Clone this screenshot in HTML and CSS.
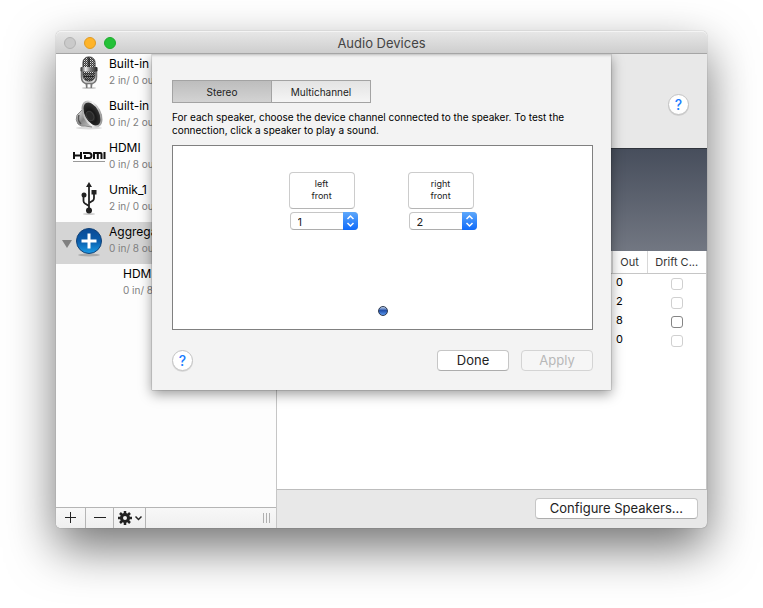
FILE: index.html
```html
<!DOCTYPE html>
<html lang="en">
<head>
    <meta charset="UTF-8">
    <meta name="viewport" content="width=device-width, initial-scale=1.0">
    <title>Audio Devices</title>
    <link rel="stylesheet" href="styles.css">
</head>
<body>
    <div class="window">
        <header class="titlebar">
            <button class="light close" aria-label="Close"></button>
            <button class="light minimize" aria-label="Minimize"></button>
            <button class="light zoom" aria-label="Zoom"></button>
            <h1>Audio Devices</h1>
        </header>
        <div class="content">
            <aside class="sidebar">
                <ul class="devices">
                    <li class="device">
                        <svg class="device-icon" viewBox="0 0 34 34">
                            <defs>
                                <linearGradient id="chrome">
                                    <stop offset="0" stop-color="#222"/>
                                    <stop offset=".3" stop-color="#eee"/>
                                    <stop offset=".6" stop-color="#777"/>
                                    <stop offset="1" stop-color="#222"/>
                                </linearGradient>
                                <pattern id="mesh" width="2" height="2" patternUnits="userSpaceOnUse">
                                    <rect width="2" height="2" fill="#3a3a3a"/>
                                    <rect width="1" height="1" fill="#ddd"/>
                                    <rect x="1" y="1" width="1" height="1" fill="#888"/>
                                </pattern>
                            </defs>
                            <ellipse cx="17" cy="32" rx="7" ry="1" fill="#c8c8c8"/>
                            <path d="M9.500 14v7q0 5 4 6.500h7q4-1.500 4-6.500v-7" fill="#d8d8d8" stroke="#777" stroke-width="1.500"/>
                            <rect x="11" y="1" width="12" height="24" rx="5.500" fill="url(#mesh)" stroke="#333"/>
                            <rect x="8.500" y="11" width="17" height="4.500" rx="1" fill="url(#chrome)"/>
                            <path d="M17 2v9" stroke="#222" stroke-width="1.500"/>
                            <path d="M12 18h10M12 20.500h10M13 23h8" stroke="#222"/>
                            <path d="M13.500 27h7l-.5 5h-1.500v-4h-3v4H14z" fill="#777"/>
                        </svg>
                        <div><p class="name">Built-in Microphone</p><p class="ports">2 in/ 0 outs</p></div>
                    </li>
                    <li class="device">
                        <svg class="device-icon" viewBox="0 0 34 34">
                            <defs>
                                <linearGradient id="rim" x2="1" y2="1">
                                    <stop offset="0" stop-color="#888"/>
                                    <stop offset=".5" stop-color="#f4f4f4"/>
                                    <stop offset="1" stop-color="#777"/>
                                </linearGradient>
                                <linearGradient id="body" x2="1" y2="1">
                                    <stop offset="0" stop-color="#eee"/>
                                    <stop offset=".5" stop-color="#888"/>
                                    <stop offset="1" stop-color="#ccc"/>
                                </linearGradient>
                                <radialGradient id="cone" cx=".4" cy=".55" r=".7">
                                    <stop offset="0" stop-color="#4a4a4a"/>
                                    <stop offset=".35" stop-color="#181818"/>
                                    <stop offset="1" stop-color="#454545"/>
                                </radialGradient>
                            </defs>
                            <ellipse cx="17" cy="30" rx="13" ry="1.500" fill="#ddd"/>
                            <path d="M10 12l-5 5q-2 5 1 9 3 3 7 2l7 1z" fill="url(#body)" stroke="#888"/>
                            <path d="M7 17q-2 5 2 9" fill="none" stroke="#555" stroke-width="1.500"/>
                            <ellipse cx="20" cy="16" rx="8.500" ry="14" transform="rotate(-28 20 16)" fill="#777"/>
                            <ellipse cx="20" cy="16" rx="8" ry="13.500" transform="rotate(-28 20 16)" fill="url(#cone)" stroke="url(#rim)" stroke-width="2"/>
                            <ellipse cx="18" cy="18" rx="3.500" ry="5" transform="rotate(-28 18 18)" fill="#2a2a2a" stroke="#3f3f3f"/>
                        </svg>
                        <div><p class="name">Built-in Output</p><p class="ports">0 in/ 2 outs</p></div>
                    </li>
                    <li class="device">
                        <svg class="device-icon" viewBox="0 0 34 34">
                            <g fill="none" stroke="#111" stroke-width="2">
                                <path d="M2 12v7M9 12v7M2 15.500h7"/>
                                <path d="M11 13h6q2.500 0 2.500 2.500t-2.500 2.500h-4v-3"/>
                                <path d="M22 19v-6h6.500q1 0 1 1v5M25.800 13v6"/>
                                <path d="M32.500 12v7"/>
                            </g>
                            <path d="M1 21.500h32" stroke="#999"/>
                        </svg>
                        <div><p class="name">HDMI</p><p class="ports">0 in/ 8 outs</p></div>
                    </li>
                    <li class="device">
                        <svg class="device-icon" viewBox="0 0 34 34">
                            <ellipse cx="17" cy="32" rx="6" ry="1" fill="#ccc"/>
                            <path d="M17 4v25M17 24l-4-2.500q-1.500-1-1.500-2.500v-5M17 21l4-2.500q1-1 1-2.500v-5" fill="none" stroke="#222" stroke-width="1.800"/>
                            <path d="M17 0l3 5h-6z" fill="#222"/>
                            <circle cx="12" cy="13" r="2.500" fill="#222"/>
                            <rect x="19.500" y="8" width="5" height="4.500" fill="#222"/>
                            <circle cx="17" cy="28.500" r="3" fill="#222"/>
                        </svg>
                        <div><p class="name">Umik_1</p><p class="ports">2 in/ 0 outs</p></div>
                    </li>
                    <li class="device selected">
                        <span class="disclosure"></span>
                        <svg class="device-icon" viewBox="0 0 34 34">
                            <defs>
                                <linearGradient id="blue" x2="0" y2="1">
                                    <stop offset="0" stop-color="#0b4a94"/>
                                    <stop offset=".5" stop-color="#0a5cab"/>
                                    <stop offset="1" stop-color="#1a9be6"/>
                                </linearGradient>
                            </defs>
                            <ellipse cx="17" cy="31" rx="11" ry="1.500" fill="#aaa"/>
                            <circle cx="17" cy="17" r="12.500" fill="url(#blue)" stroke="#124276"/>
                            <path d="M17 9.500v15M9.500 17h15" stroke="#fff" stroke-width="3"/>
                        </svg>
                        <div><p class="name">Aggregate Device</p><p class="ports">0 in/ 8 outs</p></div>
                    </li>
                    <li class="device child">
                        <div><p class="name">HDMI</p><p class="ports">0 in/ 8 outs</p></div>
                    </li>
                </ul>
                <div class="toolbar">
                    <button class="tool" aria-label="Add device">
                        <svg width="12" height="12" viewBox="0 0 12 12"><path d="M5.500 0v11M0 5.500h11" stroke="#222"/></svg>
                    </button>
                    <button class="tool remove" aria-label="Remove device">
                        <svg width="12" height="12" viewBox="0 0 12 12"><path d="M0 5.500h12" stroke="#222"/></svg>
                    </button>
                    <button class="tool menu" aria-label="Device actions">
                        <svg width="24" height="14" viewBox="0 0 24 14">
                            <circle cx="7" cy="7" r="3.500" fill="none" stroke="#222" stroke-width="3"/>
                            <path d="M7 0v3M7 11v3M0 7h3M11 7h3M2 2l2.500 2.500M9.500 9.500L12 12M12 2L9.500 4.500M4.500 9.500L2 12" stroke="#222" stroke-width="2.500"/>
                            <path d="M17.500 5.500l3 3 3-3" fill="none" stroke="#222" stroke-width="1.500"/>
                        </svg>
                    </button>
                    <span class="grip"></span>
                </div>
            </aside>
            <main class="detail">
                <section class="summary">
                    <button class="help">?</button>
                </section>
                <section class="banner"></section>
                <section class="table-wrap">
                    <table>
                        <thead>
                            <tr><th></th><th class="out">Out</th><th class="drift">Drift C...</th></tr>
                        </thead>
                        <tbody>
                            <tr><td></td><td>0</td><td><input type="checkbox" aria-label="Drift correction 1" disabled></td></tr>
                            <tr><td></td><td>2</td><td><input type="checkbox" aria-label="Drift correction 2" disabled></td></tr>
                            <tr><td></td><td>8</td><td><input type="checkbox" aria-label="Drift correction 3"></td></tr>
                            <tr><td></td><td>0</td><td><input type="checkbox" aria-label="Drift correction 4" disabled></td></tr>
                        </tbody>
                    </table>
                </section>
                <footer class="actions">
                    <button class="btn">Configure Speakers...</button>
                </footer>
            </main>
            <div class="sheet-clip">
                <div class="sheet" role="dialog" aria-label="Configure Speakers">
                    <div class="tabs">
                        <button class="tab active">Stereo</button>
                        <button class="tab">Multichannel</button>
                    </div>
                    <p class="hint">For each speaker, choose the device channel connected to the speaker. To test the connection, click a speaker to play a sound.</p>
                    <div class="stage">
                        <div class="speakers">
                            <div class="speaker">
                                <button class="speaker-btn">left<br>front</button>
                                <div class="channel">
                                    <select aria-label="Left front channel"><option>1</option><option>2</option></select>
                                    <svg class="arrows" viewBox="0 0 15 18"><path d="M4.500 7l3-3 3 3M4.500 11l3 3 3-3" fill="none" stroke="#fff" stroke-width="1.500"/></svg>
                                </div>
                            </div>
                            <div class="speaker">
                                <button class="speaker-btn">right<br>front</button>
                                <div class="channel">
                                    <select aria-label="Right front channel"><option>2</option><option>1</option></select>
                                    <svg class="arrows" viewBox="0 0 15 18"><path d="M4.500 7l3-3 3 3M4.500 11l3 3 3-3" fill="none" stroke="#fff" stroke-width="1.500"/></svg>
                                </div>
                            </div>
                        </div>
                        <span class="listener"></span>
                    </div>
                    <div class="sheet-actions">
                        <button class="help">?</button>
                        <button class="btn">Done</button>
                        <button class="btn" disabled>Apply</button>
                    </div>
                </div>
            </div>
        </div>
    </div>
</body>
</html>
```

FILE: styles.css
```css
* {
    box-sizing: border-box;
}
body {
    display: flex;
    height: 100vh;
    margin: 0;
    padding: 31px 56px 80px;
    background-color: #fff;
    color: #000;
    font-family: Inter, "Open Sans", sans-serif;
    font-size: 12px;
    overflow: hidden;
}
p, h1, ul {
    margin: 0;
    padding: 0;
}
button, select {
    margin: 0;
    padding: 0;
    font-family: inherit;
    color: #222;
}
.window {
    flex: 1;
    display: flex;
    flex-direction: column;
    border-radius: 5px;
    background-color: #e8e8e8;
    box-shadow: 0 0 1px rgba(0, 0, 0, 0.5), 0 20px 48px rgba(0, 0, 0, 0.55);
}

/* Title bar */
.titlebar {
    display: flex;
    align-items: center;
    gap: 8px;
    height: 23px;
    padding: 1px 8px 0;
    border-bottom: 1px solid #a5a5a5;
    border-radius: 5px 5px 0 0;
    background: linear-gradient(#e8e8e8, #cecece);
    box-shadow: inset 0 1px #f4f4f4;
}
.titlebar h1 {
    flex: 1;
    padding-right: 60px;
    color: #444;
    font-size: 13px;
    font-weight: 400;
    text-align: center;
}
.light {
    width: 12px;
    height: 12px;
    border: 1px solid #b3b3b3;
    border-radius: 50%;
    background-color: #cacaca;
}
.minimize {
    border-color: #df9b25;
    background-color: #ffb429;
}
.zoom {
    border-color: #1dac2d;
    background-color: #24c138;
}
.content {
    position: relative;
    flex: 1;
    display: flex;
    min-height: 0;
}

/* Device list */
.sidebar {
    flex: 0 0 34%;
    display: flex;
    flex-direction: column;
    border-right: 1px solid #c6c6c6;
    border-radius: 0 0 0 5px;
    background-color: #fdfdfd;
    overflow: hidden;
}
.devices {
    flex: 1;
    list-style: none;
}
.device {
    display: flex;
    align-items: flex-start;
    gap: 3px;
    height: 42px;
    padding: 1px 0 0 16px;
    white-space: nowrap;
}
.selected {
    gap: 0;
    padding-left: 6px;
    background-color: #d5d5d5;
}
.child {
    padding-left: 67px;
}
.device-icon {
    flex: none;
    width: 34px;
    height: 34px;
    margin-top: 1px;
}
.selected .device-icon {
    margin-right: 3px;
}
.disclosure {
    align-self: center;
    border: 5px solid transparent;
    border-top: 8px solid #808080;
    border-bottom: 0;
}
.name {
    line-height: 17px;
}
.ports {
    color: #808080;
    font-size: 10px;
    line-height: 17px;
}
.toolbar {
    display: flex;
    align-items: center;
    height: 21px;
    border-top: 1px solid #b5b5b5;
    background: linear-gradient(#f8f8f8, #efefef);
}
.tool {
    display: flex;
    align-items: center;
    justify-content: center;
    width: 30px;
    height: 20px;
    border: 0;
    border-right: 1px solid #b5b5b5;
    background: none;
}
.remove {
    width: 28px;
}
.menu {
    width: 32px;
}
.grip {
    width: 7px;
    height: 10px;
    margin: 0 6px 0 auto;
    background: repeating-linear-gradient(90deg, #b0b0b0 0 1px, transparent 1px 3px);
}

/* Right pane */
.detail {
    flex: 1;
    display: flex;
    flex-direction: column;
    min-width: 0;
}
.summary {
    display: flex;
    justify-content: flex-end;
    align-items: flex-end;
    height: 94px;
    padding: 33px 18px;
}
.help {
    width: 21px;
    height: 21px;
    border: 1px solid #c3c3c3;
    border-radius: 50%;
    background-color: #fff;
    box-shadow: 0 1px rgba(0, 0, 0, 0.1);
    color: #1a7dff;
    font-size: 14px;
    font-weight: 500;
    line-height: 19px;
}
.banner {
    height: 103px;
    border-top: 1px solid #30343c;
    background: linear-gradient(#474e5c, #727782);
}
.table-wrap {
    flex: 1;
    border-right: 1px solid #c6c6c6;
    background-color: #fff;
}
table {
    width: 100%;
    border-collapse: collapse;
    table-layout: fixed;
}
th {
    height: 22px;
    padding: 0;
    border-right: 1px solid #d8d8d8;
    border-bottom: 1px solid #c6c6c6;
    color: #333;
    font-size: 11px;
    font-weight: 400;
}
th:last-child {
    border-right: 0;
}
.out {
    width: 35px;
}
.drift {
    width: 59px;
}
td {
    height: 19px;
    padding: 0 0 2px 4px;
    font-size: 11px;
}
td:last-child {
    padding: 3px 0 0;
    text-align: center;
}
input[type="checkbox"] {
    appearance: none;
    display: block;
    width: 12px;
    height: 12px;
    margin: 0 auto;
    border: 1px solid #858585;
    border-radius: 3px;
    background-color: #fff;
}
input[type="checkbox"]:disabled {
    border-color: #d0d0d0;
}
.actions {
    display: flex;
    justify-content: flex-end;
    height: 39px;
    padding: 8px 9px;
    border-top: 1px solid #bdbdbd;
}
.btn {
    height: 21px;
    min-width: 72px;
    padding: 0 14px 1px;
    border: 1px solid #c6c6c6;
    border-bottom-color: #adadad;
    border-radius: 4px;
    background-color: #fff;
    font-size: 13px;
}
.btn:disabled {
    border-color: #d4d4d4;
    background-color: #f6f6f6;
    color: #b8b8b8;
}

/* Sheet that drops from the title bar */
.sheet-clip {
    position: absolute;
    inset: 0;
    display: flex;
    justify-content: center;
    align-items: flex-start;
    overflow: hidden;
}
.sheet {
    width: 459px;
    max-width: 100%;
    padding: 26px 18px 19px 20px;
    background-color: #f3f3f3;
    box-shadow: 0 0 1px rgba(0, 0, 0, 0.6), 0 4px 12px rgba(0, 0, 0, 0.4), inset 0 3px 3px -2px rgba(0, 0, 0, 0.25);
}
.tabs {
    display: flex;
    width: 199px;
    height: 23px;
    border: 1px solid #a3a3a3;
}
.tab {
    flex: 1;
    border: 0;
    background: linear-gradient(#e3e3e3, #f5f5f5);
    font-size: 10px;
}
.tab.active {
    border-right: 1px solid #a3a3a3;
    background: linear-gradient(#bdbdbd, #d3d3d3);
}
.hint {
    margin: 8px 0;
    font-size: 10px;
    line-height: 13px;
}
.stage {
    display: flex;
    flex-direction: column;
    align-items: center;
    justify-content: space-between;
    height: 185px;
    padding: 26px 0 13px;
    border: 1px solid #808080;
    background-color: #fff;
}
.speakers {
    display: flex;
    gap: 50px;
}
.speaker {
    display: flex;
    flex-direction: column;
    gap: 3px;
    width: 69px;
}
.speaker-btn {
    width: 66px;
    height: 37px;
    padding-bottom: 2px;
    border: 1px solid #ccc;
    border-bottom-color: #b5b5b5;
    border-radius: 4px;
    background-color: #fff;
    font-size: 9px;
    line-height: 12px;
}
.channel {
    position: relative;
    height: 18px;
    margin-left: 1px;
}
.channel select {
    appearance: none;
    display: block;
    width: 100%;
    height: 18px;
    padding: 2px 7px 0;
    border: 1px solid #c6c6c6;
    border-bottom-color: #adadad;
    border-radius: 4px;
    background-color: #fff;
    font-size: 11px;
}
.arrows {
    position: absolute;
    top: 0;
    right: 0;
    width: 15px;
    height: 18px;
    border-radius: 0 4px 4px 0;
    background: linear-gradient(#5ea8fb, #0f6bfa);
    pointer-events: none;
}
.listener {
    width: 10px;
    height: 10px;
    border: 1px solid #2d3a50;
    border-radius: 50%;
    background: linear-gradient(#c5d6ee, #1e4da8 45%, #5d9bf0);
}
.sheet-actions {
    display: flex;
    gap: 12px;
    margin-top: 20px;
}
.sheet-actions .help {
    margin-right: auto;
}
```
